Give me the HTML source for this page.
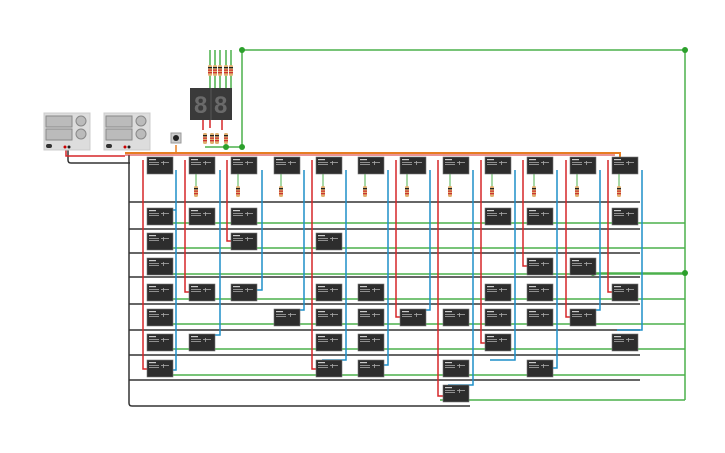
<!DOCTYPE html>
<html><head><meta charset="utf-8"><style>
html,body{margin:0;padding:0;background:#fff;width:725px;height:453px;overflow:hidden}
</style></head><body>
<svg width="725" height="453" viewBox="0 0 725 453" xmlns="http://www.w3.org/2000/svg">
<defs>
<g id="r">
<rect x="0" y="0" width="26" height="17" fill="#2d2d2d" stroke="#777" stroke-width="0.6"/>
<rect x="2" y="2" width="7" height="1.2" fill="#ccc"/>
<rect x="2" y="5" width="10" height="0.8" fill="#aaa"/>
<rect x="2" y="7" width="10" height="0.8" fill="#aaa"/>
<rect x="14" y="5" width="8" height="0.8" fill="#aaa"/>
<rect x="16" y="4" width="0.8" height="4" fill="#aaa"/>
</g>
<g id="res">
<rect x="-2" y="0" width="4" height="11" rx="1.5" fill="#e0b070"/>
<rect x="-2" y="2" width="4" height="1.3" fill="#222"/>
<rect x="-2" y="4.5" width="4" height="1.3" fill="#c33"/>
<rect x="-2" y="7" width="4" height="1.3" fill="#c33"/>
</g>
</defs>
<g fill="none" stroke-width="1.5">
<g stroke="#4cb04c">
<path d="M150 223H685M150 248H685M150 274H685M150 299H685M150 324H685M150 349H685M150 375H685M440 400H685"/>
<path d="M685 50V400"/>
<path d="M242 50H685M242 50V147M205 147H242"/>
<path d="M210 50V88M215 50V88M220 50V88M226 50V88M231 50V88"/>
<path d="M595 273H685"/>
</g>
<g stroke="#333">
<path d="M129 155V403Q129 406 132 406H470M129 202H640M129 229H640M129 253H640M129 277H640M129 304H640M129 330H640M129 355H640M129 380H640"/>
<path d="M68 150V160Q68 163 71 163H130"/>
</g>
<path d="M125 153H620V160" stroke="#e67e22" stroke-width="2"/>
<path d="M66 150V156H125" stroke="#d62728"/>
<path d="M125 155H615" stroke="#d62728" stroke-width="1"/>
<path d="M176 145V153" stroke="#e67e22"/>
<g stroke="#d62728">
<path d="M143 160V369H148"/>
<path d="M185 160V292H190"/>
<path d="M227 160V241H232"/>
<path d="M312 160V369H317"/>
<path d="M396 160V317H401"/>
<path d="M438 160V396H444"/>
<path d="M481 160V343H486"/>
<path d="M523 160V266H528"/>
<path d="M566 160V317H571"/>
<path d="M608 160V292H613"/>
<path d="M203 120V130M210 120V128M222 120V130"/>
</g>
<g stroke="#1f8fc9">
<path d="M176 170V370H172M176 210H152"/>
<path d="M220 170V335H196"/>
<path d="M262 170V290H236"/>
<path d="M304 170V310H280"/>
<path d="M346 170V360H322"/>
<path d="M388 170V365H362"/>
<path d="M430 170V310H405"/>
<path d="M473 170V385H448"/>
<path d="M515 170V360H490"/>
<path d="M557 170V368H532"/>
<path d="M600 170V310H575"/>
<path d="M642 170V330H617"/>
</g>
<g stroke="#4cb04c" stroke-width="1">
<path d="M196 174V190M238 174V190M281 174V190M323 174V190M365 174V190M407 174V190M450 174V190M492 174V190M534 174V190M577 174V190M619 174V190"/>
</g>
</g>
<use href="#res" x="196" y="186"/><use href="#res" x="238" y="186"/><use href="#res" x="281" y="186"/>
<use href="#res" x="323" y="186"/><use href="#res" x="365" y="186"/><use href="#res" x="407" y="186"/>
<use href="#res" x="450" y="186"/><use href="#res" x="492" y="186"/><use href="#res" x="534" y="186"/>
<use href="#res" x="577" y="186"/><use href="#res" x="619" y="186"/>
<use href="#res" x="210" y="65"/><use href="#res" x="215" y="65"/><use href="#res" x="220" y="65"/><use href="#res" x="226" y="65"/><use href="#res" x="231" y="65"/>
<use href="#res" x="205" y="133"/><use href="#res" x="212" y="133"/><use href="#res" x="217" y="133"/><use href="#res" x="226" y="133"/>
<g fill="#2ca02c">
<circle cx="242" cy="50" r="3"/><circle cx="685" cy="50" r="3"/><circle cx="242" cy="147" r="3"/><circle cx="226" cy="147" r="3"/>
<circle cx="593" cy="273" r="3"/><circle cx="685" cy="273" r="3"/>
</g>
<rect x="190" y="88" width="42" height="32" fill="#3a3a3a"/>
<line x1="211" y1="88" x2="211" y2="120" stroke="#555"/>
<text x="194" y="113" font-family="Liberation Sans, sans-serif" font-size="24" fill="#6a6a6a" font-weight="bold">8</text>
<text x="214" y="113" font-family="Liberation Sans, sans-serif" font-size="24" fill="#6a6a6a" font-weight="bold">8</text>
<g>
<rect x="44" y="113" width="46" height="37" fill="#ddd" stroke="#ccc"/>
<rect x="46" y="116" width="26" height="11" fill="#bbb" stroke="#888"/>
<rect x="46" y="129" width="26" height="11" fill="#bbb" stroke="#888"/>
<circle cx="81" cy="121" r="5" fill="#bbb" stroke="#888"/><circle cx="81" cy="134" r="5" fill="#bbb" stroke="#888"/>
<rect x="46" y="144" width="6" height="4" rx="2" fill="#333"/>
<circle cx="65" cy="147" r="1.5" fill="#c00"/><circle cx="69" cy="147" r="1.5" fill="#222"/>
<rect x="104" y="113" width="46" height="37" fill="#ddd" stroke="#ccc"/>
<rect x="106" y="116" width="26" height="11" fill="#bbb" stroke="#888"/>
<rect x="106" y="129" width="26" height="11" fill="#bbb" stroke="#888"/>
<circle cx="141" cy="121" r="5" fill="#bbb" stroke="#888"/><circle cx="141" cy="134" r="5" fill="#bbb" stroke="#888"/>
<rect x="106" y="144" width="6" height="4" rx="2" fill="#333"/>
<circle cx="125" cy="147" r="1.5" fill="#c00"/><circle cx="129" cy="147" r="1.5" fill="#222"/>
</g>
<rect x="171" y="133" width="10" height="10" fill="#ccc" stroke="#999"/><circle cx="176" cy="138" r="3" fill="#222"/>
<g>
<use href="#r" x="147" y="157"/><use href="#r" x="189" y="157"/><use href="#r" x="231" y="157"/><use href="#r" x="274" y="157"/><use href="#r" x="316" y="157"/><use href="#r" x="358" y="157"/><use href="#r" x="400" y="157"/><use href="#r" x="443" y="157"/><use href="#r" x="485" y="157"/><use href="#r" x="527" y="157"/><use href="#r" x="570" y="157"/><use href="#r" x="612" y="157"/>
<use href="#r" x="147" y="208"/><use href="#r" x="189" y="208"/><use href="#r" x="231" y="208"/><use href="#r" x="485" y="208"/><use href="#r" x="527" y="208"/><use href="#r" x="612" y="208"/>
<use href="#r" x="147" y="233"/><use href="#r" x="231" y="233"/><use href="#r" x="316" y="233"/>
<use href="#r" x="147" y="258"/><use href="#r" x="527" y="258"/><use href="#r" x="570" y="258"/>
<use href="#r" x="147" y="284"/><use href="#r" x="189" y="284"/><use href="#r" x="231" y="284"/><use href="#r" x="316" y="284"/><use href="#r" x="358" y="284"/><use href="#r" x="485" y="284"/><use href="#r" x="527" y="284"/><use href="#r" x="612" y="284"/>
<use href="#r" x="147" y="309"/><use href="#r" x="274" y="309"/><use href="#r" x="316" y="309"/><use href="#r" x="358" y="309"/><use href="#r" x="400" y="309"/><use href="#r" x="443" y="309"/><use href="#r" x="485" y="309"/><use href="#r" x="527" y="309"/><use href="#r" x="570" y="309"/>
<use href="#r" x="147" y="334"/><use href="#r" x="189" y="334"/><use href="#r" x="316" y="334"/><use href="#r" x="358" y="334"/><use href="#r" x="485" y="334"/><use href="#r" x="612" y="334"/>
<use href="#r" x="147" y="360"/><use href="#r" x="316" y="360"/><use href="#r" x="358" y="360"/><use href="#r" x="443" y="360"/><use href="#r" x="527" y="360"/>
<use href="#r" x="443" y="385"/>
</g>
</svg>
</body></html>
